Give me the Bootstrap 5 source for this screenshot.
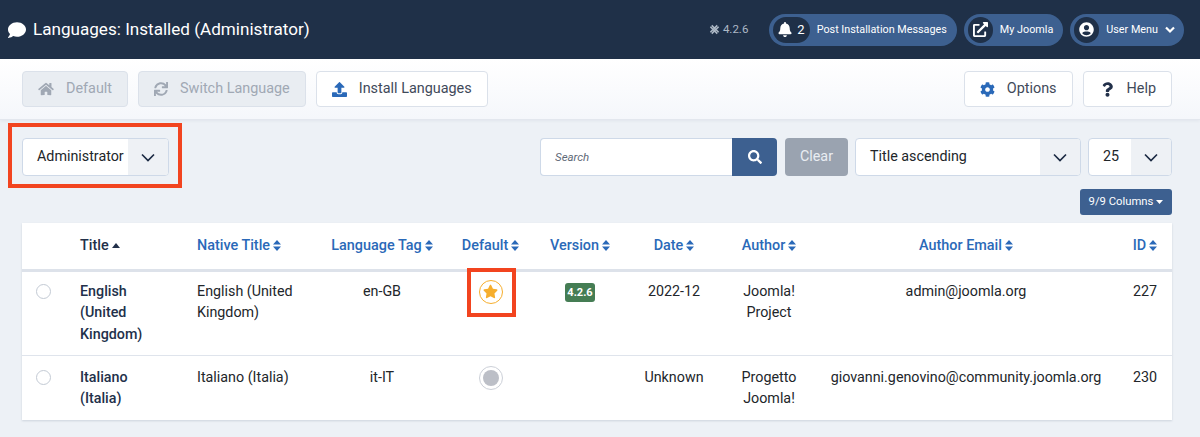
<!DOCTYPE html>
<html lang="en"><head><meta charset="utf-8"><title>Languages: Installed (Administrator)</title>
<link href="https://cdn.jsdelivr.net/npm/bootstrap@5.3.0/dist/css/bootstrap.min.css" rel="stylesheet">
<style>
html,body{height:437px;overflow:hidden}
body{font-family:Roboto,"Liberation Sans",sans-serif;font-size:14.3px;line-height:21.7px;background:#edf1f6;color:#22262a;position:relative}
svg{fill:currentColor;display:block;flex:none}
.topbar{height:59px;background:#1f3048;color:#fff;padding:0 16px 0 8px}
.topbar h1{font-size:17.1px;font-weight:400;margin:0 0 0 7px;line-height:1}
.ver{font-size:11.5px;color:#aeb9c6;margin-right:21px;gap:3px}
.pill{height:32px;background:#3d6090;border-radius:16px;padding:3px 10px 3px 4px;font-size:10.8px;color:#fff;gap:7px;margin-right:7px}
.pill:last-child{margin-right:0;padding-right:9px}
.pill-ico{height:26px;min-width:25px;border-radius:13px;background:#1f3048;gap:5px;padding:0 5px;font-size:13px}
.actionbar{height:61px;background:linear-gradient(#fff,#f5f7fb);border-bottom:1px solid #e3e7ee;padding:12px 28px 0 22px;gap:10px;box-shadow:0 1px 3px rgba(30,50,80,.06)}
.tbtn{height:36px;border:1px solid #dbe1ea;border-radius:4px;background:#fff;color:#3f4a5a;font-size:14.4px;padding:0 15px;gap:12px}
.tbtn svg{color:#2a69b8}
.tbtn.off{background:#e9edf2;color:#a0a8b4}
.tbtn.off svg{color:#a0a8b4}
.tbtn.help{padding-left:18px;gap:14px}
.tbtn.help svg{color:#22304a}
.filters{padding:18px 28px 0 22px}
.sel{height:38px;border:1px solid #ced9e8;border-radius:4px;padding:0 0 0 14px;font-size:14.3px;color:#22262a;background:#fff;position:relative;overflow:hidden}
.sel-tail{width:40px;height:100%;background:#eef1f5;color:#1c2b44;margin-left:auto}
.sel-a{width:147px}.sel-b{width:226px}.sel-c{width:84px;margin-left:7px}
.searchbox{width:237px;height:38px}
.searchbox .form-control{height:38px;border:1px solid #ced9e8;border-right:0;font-size:11.5px;font-style:italic;padding-left:14px;border-radius:4px 0 0 4px}
.searchbox .form-control::placeholder{color:#5f6a78}
.search-go{flex:none;width:45px;background:#3d6090;color:#fff;border-radius:0 4px 4px 0}
.clearbtn{width:63px;height:38px;background:#9aa3b0;color:#e9edf2;border-radius:4px;font-size:14.3px;margin:0 7px 0 8px}
.colbar{padding:13px 28px 8px 0}
.colbtn{width:92px;height:26px;background:#3d6090;color:#fff;font-size:11.3px;border-radius:3px;gap:3px}
.sheet{margin:0 28px 0 22px;background:#fff;box-shadow:0 1px 2px rgba(30,50,80,.15);height:197px}
.sheet table{table-layout:fixed;width:1150px;margin:0;--bs-table-color:#22262a;font-size:14.3px}
.sheet th,.sheet td{padding:0 12px;border-bottom:1px solid #dfe4ec;vertical-align:top}
.sheet thead th{height:47px;vertical-align:middle;border-bottom:3px solid #dde2ea;color:#2a69b8;font-weight:500;white-space:nowrap;font-size:14.4px;padding:0 4px}
.sheet thead th:nth-child(2),.sheet thead th:nth-child(3){padding-left:12px}
.sheet thead th.cur{color:#22304a}
.sheet tbody tr:first-child>*{padding-top:9px;height:85px}
.sheet tbody tr:last-child>*{padding-top:11px;height:65px;border-bottom:0}
.sheet tbody th{font-weight:500;color:#22304a;padding-right:17px}
.srt{display:inline-block;vertical-align:-1px;margin-left:3px}
.srt.up{vertical-align:2px}
.radio{width:15px;height:15px;border:1px solid #c3cad4;border-radius:50%;background:#fff;margin:3px 0 0 2px}
.stat{width:24px;height:24px;border-radius:50%;margin:-1px auto 0}
.stat.on{border:1.500px solid #f6ae2d;color:#f6ae2d;padding:3px}
.stat.no{border:1.500px solid #ccd0d8;padding:3px}
.stat.no i{display:block;width:100%;height:100%;background:#bcbfc7;border-radius:50%}
.vbadge{display:inline-block;background:#457d54;color:#fff;font-size:11px;font-weight:700;line-height:13px;padding:3px 2px;border-radius:3px;margin-top:2px;vertical-align:top}
.note{position:absolute;border:4px solid #f2441f;pointer-events:none}
.note-a{left:8px;top:123px;width:174px;height:65px}
.note-b{left:467px;top:268px;width:49px;height:49px}
</style></head>
<body>
<header class="topbar d-flex align-items-center">
 <svg width="18" height="18" viewBox="0 0 512 512"><path d="M256 32C114.6 32 0 125.1 0 240c0 49.6 21.4 95 57 130.7C44.5 421.1 2.7 466 2.2 466.5c-2.2 2.3-2.8 5.7-1.5 8.7S4.8 480 8 480c66.3 0 116-31.8 140.6-51.4 32.7 12.3 69 19.4 107.4 19.4 141.4 0 256-93.1 256-208S397.4 32 256 32z"/></svg>
 <h1>Languages: Installed (Administrator)</h1>
 <div class="ver d-flex align-items-center ms-auto"><svg width="11" height="11" viewBox="0 0 12 12"><path d="M3 1.500 10.500 9M9 1.500 1.500 9M1.500 3 9 10.500M10.500 3 3 10.500" fill="none" stroke="currentColor" stroke-width="1.600"/></svg><span>4.2.6</span></div>
 <div class="pill d-flex align-items-center"><span class="pill-ico d-flex align-items-center justify-content-center"><svg width="14" height="15" viewBox="0 0 448 512"><path d="M224 512c35.32 0 63.97-28.65 63.97-64H160.03c0 35.35 28.65 64 63.97 64zm215.39-149.71c-19.32-20.76-55.47-51.99-55.47-154.29 0-77.7-54.48-139.9-127.94-155.16V32c0-17.67-14.32-32-31.98-32s-31.98 14.33-31.98 32v20.84C118.56 68.1 64.08 130.3 64.08 208c0 102.3-36.15 133.53-55.47 154.29-6 6.45-8.66 14.16-8.61 21.71.11 16.4 12.98 32 32.1 32h383.8c19.12 0 32-15.6 32.1-32 .05-7.55-2.61-15.27-8.61-21.71z"/></svg><span>2</span></span><span>Post Installation Messages</span></div>
 <div class="pill d-flex align-items-center"><span class="pill-ico d-flex align-items-center justify-content-center"><svg width="15" height="15" viewBox="0 0 512 512"><path d="M432,320H400a16,16,0,0,0-16,16V448H64V128H208a16,16,0,0,0,16-16V80a16,16,0,0,0-16-16H48A48,48,0,0,0,0,112V464a48,48,0,0,0,48,48H400a48,48,0,0,0,48-48V336A16,16,0,0,0,432,320ZM488,0h-128c-21.37,0-32.05,25.91-17,41l35.73,35.73L135,320.37a24,24,0,0,0,0,34L157.67,377a24,24,0,0,0,34,0L435.28,133.32,471,169c15,15,41,4.5,41-17V24A24,24,0,0,0,488,0Z"/></svg></span><span>My Joomla</span></div>
 <div class="pill d-flex align-items-center"><span class="pill-ico d-flex align-items-center justify-content-center"><svg width="15" height="15" viewBox="0 0 496 512"><path d="M248 8C111 8 0 119 0 256s111 248 248 248 248-111 248-248S385 8 248 8zm0 96c48.6 0 88 39.4 88 88s-39.4 88-88 88-88-39.4-88-88 39.4-88 88-88zm0 344c-58.7 0-111.3-26.6-146.5-68.2 18.8-35.4 55.6-59.8 98.5-59.8 2.4 0 4.8.4 7.1 1.1 13 4.2 26.6 6.9 40.9 6.9 14.3 0 28-2.7 40.9-6.9 2.3-.7 4.7-1.1 7.1-1.1 42.9 0 79.7 24.4 98.5 59.8C359.3 421.4 306.7 448 248 448z"/></svg></span><span>User Menu</span><svg width="10" height="8" viewBox="0 0 10 8"><path d="M1 1.500 5 5.500 9 1.500" fill="none" stroke="currentColor" stroke-width="2.200"/></svg></div>
</header>

<div class="actionbar d-flex align-items-start">
 <div class="tbtn off d-flex align-items-center"><svg width="16" height="14" viewBox="0 0 576 512"><path d="M280.37 148.26L96 300.11V464a16 16 0 0 0 16 16l112.06-.29a16 16 0 0 0 15.92-16V368a16 16 0 0 1 16-16h64a16 16 0 0 1 16 16v95.64a16 16 0 0 0 16 16.05L464 480a16 16 0 0 0 16-16V300L295.67 148.26a12.19 12.19 0 0 0-15.3 0zM571.6 251.47L488 182.56V44.05a12 12 0 0 0-12-12h-56a12 12 0 0 0-12 12v72.61L318.47 43a48 48 0 0 0-61 0L4.34 251.47a12 12 0 0 0-1.6 16.9l25.5 31A12 12 0 0 0 45.15 301l235.22-193.74a12.19 12.19 0 0 1 15.3 0L530.9 301a12 12 0 0 0 16.9-1.6l25.5-31a12 12 0 0 0-1.7-16.93z"/></svg><span>Default</span></div>
 <div class="tbtn off d-flex align-items-center"><svg width="14" height="14" viewBox="0 0 512 512"><path d="M440.65 12.57l4 82.77A247.16 247.16 0 0 0 255.83 8C134.73 8 33.91 94.92 12.29 209.82A12 12 0 0 0 24.09 224h49.05a12 12 0 0 0 11.67-9.26 175.91 175.91 0 0 1 317-56.94l-101.46-4.86a12 12 0 0 0-12.57 12v47.41a12 12 0 0 0 12 12H500a12 12 0 0 0 12-12V12a12 12 0 0 0-12-12h-47.37a12 12 0 0 0-11.98 12.57zM255.83 432a175.61 175.61 0 0 1-146-77.8l101.8 4.87a12 12 0 0 0 12.57-12v-47.4a12 12 0 0 0-12-12H12a12 12 0 0 0-12 12V500a12 12 0 0 0 12 12h47.35a12 12 0 0 0 12-12.6l-4.15-82.57A247.17 247.17 0 0 0 255.83 504c121.11 0 221.93-86.92 243.55-201.82a12 12 0 0 0-11.8-14.18h-49.05a12 12 0 0 0-11.67 9.26A175.86 175.86 0 0 1 255.83 432z"/></svg><span>Switch Language</span></div>
 <div class="tbtn d-flex align-items-center"><svg width="15" height="15" viewBox="0 0 512 512"><path d="M296 384h-80c-13.3 0-24-10.7-24-24V192h-87.7c-17.8 0-26.7-21.5-14.1-34.1L242.3 5.700c7.500-7.500 19.800-7.500 27.300 0l152.200 152.200c12.600 12.600 3.700 34.100-14.100 34.100H320v168c0 13.300-10.700 24-24 24zm216-8v112c0 13.300-10.700 24-24 24H24c-13.300 0-24-10.700-24-24V376c0-13.300 10.700-24 24-24h136v8c0 30.900 25.100 56 56 56h80c30.900 0 56-25.100 56-56v-8h136c13.300 0 24 10.700 24 24z"/></svg><span>Install Languages</span></div>
 <div class="tbtn d-flex align-items-center ms-auto"><svg width="15" height="15" viewBox="0 0 512 512"><path d="M487.4 315.7l-42.6-24.6c4.3-23.2 4.3-47 0-70.2l42.6-24.6c4.9-2.8 7.1-8.6 5.500-14-11.100-35.600-30-67.800-54.700-94.600-3.800-4.100-10-5.100-14.800-2.300L380.800 110c-17.900-15.400-38.500-27.300-60.800-35.100V25.800c0-5.600-3.900-10.500-9.400-11.700-36.700-8.200-74.300-7.800-109.200 0-5.500 1.200-9.400 6.100-9.400 11.700V75c-22.200 7.900-42.800 19.800-60.800 35.100L88.700 85.500c-4.900-2.800-11-1.900-14.800 2.300-24.700 26.700-43.600 58.900-54.700 94.600-1.700 5.400.6 11.200 5.500 14L67.300 221c-4.300 23.200-4.300 47 0 70.200l-42.600 24.600c-4.900 2.800-7.100 8.600-5.500 14 11.100 35.600 30 67.800 54.700 94.600 3.800 4.100 10 5.100 14.800 2.300l42.600-24.600c17.900 15.400 38.500 27.300 60.800 35.100v49.200c0 5.600 3.900 10.500 9.400 11.700 36.700 8.200 74.300 7.800 109.200 0 5.500-1.200 9.400-6.100 9.400-11.700v-49.200c22.200-7.900 42.800-19.800 60.800-35.100l42.600 24.600c4.900 2.800 11 1.900 14.800-2.300 24.700-26.700 43.600-58.900 54.700-94.600 1.500-5.500-.7-11.300-5.600-14.100zM256 336c-44.100 0-80-35.900-80-80s35.900-80 80-80 80 35.900 80 80-35.900 80-80 80z"/></svg><span>Options</span></div>
 <div class="tbtn help d-flex align-items-center"><svg width="11" height="15" viewBox="0 0 384 512"><path d="M202.021 0C122.202 0 70.503 32.703 29.914 91.026c-7.363 10.58-5.093 25.086 5.178 32.874l43.138 32.709c10.373 7.865 25.132 6.026 33.253-4.148 25.049-31.381 43.63-49.449 82.757-49.449 30.764 0 68.816 19.799 68.816 49.631 0 22.552-18.617 34.134-48.993 51.164-35.423 19.86-82.299 44.576-82.299 106.405V320c0 13.255 10.745 24 24 24h72.471c13.255 0 24-10.745 24-24v-5.773c0-42.86 125.268-44.645 125.268-160.627C377.504 66.256 286.902 0 202.021 0zM192 373.459c-38.196 0-69.271 31.075-69.271 69.271 0 38.195 31.075 69.27 69.271 69.27s69.271-31.075 69.271-69.271-31.075-69.27-69.271-69.27z"/></svg><span>Help</span></div>
</div>

<div class="filters d-flex align-items-start">
 <div class="sel sel-a d-flex align-items-center"><span>Administrator</span><span class="sel-tail d-flex align-items-center justify-content-center"><svg width="14" height="9" viewBox="0 0 14 9"><path d="M1 1.500 7 7.500 13 1.500" fill="none" stroke="currentColor" stroke-width="1.700"/></svg></span></div>
 <div class="searchbox d-flex ms-auto"><input class="form-control" type="text" placeholder="Search"><span class="search-go d-flex align-items-center justify-content-center"><svg width="14" height="14" viewBox="0 0 512 512"><path d="M505 442.7L405.3 343c-4.5-4.5-10.6-7-17-7H372c27.6-35.3 44-79.7 44-128C416 93.1 322.900 0 208 0S0 93.100 0 208s93.100 208 208 208c48.300 0 92.700-16.400 128-44v16.300c0 6.400 2.500 12.500 7 17l99.700 99.700c9.400 9.400 24.600 9.400 33.900 0l28.300-28.300c9.400-9.400 9.400-24.600.1-34zM208 336c-70.700 0-128-57.200-128-128 0-70.700 57.200-128 128-128 70.700 0 128 57.200 128 128 0 70.700-57.200 128-128 128z"/></svg></span></div>
 <span class="clearbtn d-flex align-items-center justify-content-center">Clear</span>
 <div class="sel sel-b d-flex align-items-center"><span>Title ascending</span><span class="sel-tail d-flex align-items-center justify-content-center"><svg width="14" height="9" viewBox="0 0 14 9"><path d="M1 1.500 7 7.500 13 1.500" fill="none" stroke="currentColor" stroke-width="1.700"/></svg></span></div>
 <div class="sel sel-c d-flex align-items-center"><span>25</span><span class="sel-tail d-flex align-items-center justify-content-center"><svg width="14" height="9" viewBox="0 0 14 9"><path d="M1 1.500 7 7.500 13 1.500" fill="none" stroke="currentColor" stroke-width="1.700"/></svg></span></div>
</div>

<div class="colbar d-flex justify-content-end"><span class="colbtn d-flex align-items-center justify-content-center">9/9 Columns <svg width="7" height="4" viewBox="0 0 7 4"><path d="M0 0h7L3.500 4z"/></svg></span></div>

<div class="sheet">
<table class="table">
<colgroup><col style="width:46px"><col style="width:117px"><col style="width:134px"><col style="width:126px"><col style="width:91px"><col style="width:88px"><col style="width:100px"><col style="width:90px"><col style="width:304px"><col style="width:54px"></colgroup>
<thead><tr>
<th></th>
<th class="cur">Title<svg class="srt up" width="8" height="5" viewBox="0 0 8 5"><path d="M0 5 4 0l4 5z"/></svg></th>
<th>Native Title<svg class="srt" width="8" height="11" viewBox="0 0 8 11"><path d="M0 4.500 4 0l4 4.500zM0 6.500h8L4 11z"/></svg></th>
<th class="text-center">Language Tag<svg class="srt" width="8" height="11" viewBox="0 0 8 11"><path d="M0 4.500 4 0l4 4.500zM0 6.500h8L4 11z"/></svg></th>
<th class="text-center">Default<svg class="srt" width="8" height="11" viewBox="0 0 8 11"><path d="M0 4.500 4 0l4 4.500zM0 6.500h8L4 11z"/></svg></th>
<th class="text-center">Version<svg class="srt" width="8" height="11" viewBox="0 0 8 11"><path d="M0 4.500 4 0l4 4.500zM0 6.500h8L4 11z"/></svg></th>
<th class="text-center">Date<svg class="srt" width="8" height="11" viewBox="0 0 8 11"><path d="M0 4.500 4 0l4 4.500zM0 6.500h8L4 11z"/></svg></th>
<th class="text-center">Author<svg class="srt" width="8" height="11" viewBox="0 0 8 11"><path d="M0 4.500 4 0l4 4.500zM0 6.500h8L4 11z"/></svg></th>
<th class="text-center">Author Email<svg class="srt" width="8" height="11" viewBox="0 0 8 11"><path d="M0 4.500 4 0l4 4.500zM0 6.500h8L4 11z"/></svg></th>
<th class="text-center">ID<svg class="srt" width="8" height="11" viewBox="0 0 8 11"><path d="M0 4.500 4 0l4 4.500zM0 6.500h8L4 11z"/></svg></th>
</tr></thead>
<tbody>
<tr>
<td><div class="radio"></div></td>
<th scope="row">English (United Kingdom)</th>
<td>English (United Kingdom)</td>
<td class="text-center">en-GB</td>
<td class="text-center"><div class="stat on"><svg width="15" height="15" viewBox="0 0 576 512"><path d="M259.3 17.8L194 150.2 47.9 171.5c-26.2 3.8-36.7 36.1-17.7 54.6l105.7 103-25 145.5c-4.5 26.3 23.2 46 46.4 33.7L288 439.6l130.7 68.7c23.2 12.2 50.9-7.4 46.4-33.7l-25-145.5 105.7-103c19-18.5 8.5-50.8-17.7-54.6L382 150.2 316.7 17.8c-11.7-23.6-45.6-23.9-57.4 0z"/></svg></div></td>
<td class="text-center"><span class="vbadge">4.2.6</span></td>
<td class="text-center">2022-12</td>
<td class="text-center">Joomla! Project</td>
<td class="text-center">admin@joomla.org</td>
<td class="text-center">227</td>
</tr>
<tr>
<td><div class="radio"></div></td>
<th scope="row">Italiano (Italia)</th>
<td>Italiano (Italia)</td>
<td class="text-center">it-IT</td>
<td class="text-center"><div class="stat no"><i></i></div></td>
<td></td>
<td class="text-center">Unknown</td>
<td class="text-center">Progetto Joomla!</td>
<td class="text-center">giovanni.genovino@community.joomla.org</td>
<td class="text-center">230</td>
</tr>
</tbody>
</table>
</div>
<div class="note note-a"></div>
<div class="note note-b"></div>
<script src="https://cdn.jsdelivr.net/npm/bootstrap@5.3.0/dist/js/bootstrap.bundle.min.js"></script>
</body></html>
